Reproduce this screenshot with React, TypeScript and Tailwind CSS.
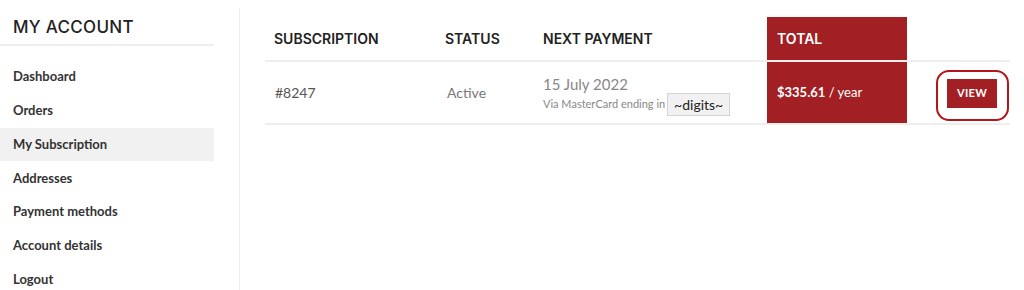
import React from 'react';

const MENU = [
  'Dashboard',
  'Orders',
  'My Subscription',
  'Addresses',
  'Payment methods',
  'Account details',
  'Logout',
];

const RED = 'bg-[#a21f23]';

export default function App() {
  return (
    <div className="flex h-[290px] w-[1024px] overflow-hidden bg-white font-['Lato','Noto_Sans',sans-serif]">
      {/* sidebar */}
      <aside className="w-[214px] shrink-0">
        <div className="h-[46px] border-b-2 border-[#eeeeee] pl-[13px] pt-[16px]">
          <h2 className="font-['Inter',sans-serif] text-[17px] font-medium leading-[22px] tracking-[0.3px] text-[#222]">
            MY ACCOUNT
          </h2>
        </div>
        <nav className="mt-[14px] flex flex-col">
          {MENU.map((item) => (
            <div
              key={item}
              className={`flex h-[33.8px] items-center pl-[13px] text-[13px] font-bold text-[#333] ${
                item === 'My Subscription' ? 'bg-[#f1f1f1]' : ''
              }`}
            >
              {item}
            </div>
          ))}
        </nav>
      </aside>

      {/* divider */}
      <div className="ml-[25px] mt-[8px] w-px bg-[#eeeeee]" />

      {/* content */}
      <main className="ml-[25px] pt-[17px]">
        <table className="w-[745px] table-fixed border-collapse">
          <colgroup>
            <col className="w-[170px]" />
            <col className="w-[98px]" />
            <col className="w-[234px]" />
            <col className="w-[140px]" />
            <col className="w-[103px]" />
          </colgroup>
          <thead>
            <tr className="h-[44px] border-b-2 border-[#eeeeee] text-left font-['Inter',sans-serif] text-[14px] font-semibold text-[#222]">
              <th className="pl-[9px] font-semibold">SUBSCRIPTION</th>
              <th className="pl-[10px] font-semibold">STATUS</th>
              <th className="pl-[10px] font-semibold">NEXT PAYMENT</th>
              <th className={`${RED} pl-[10px] font-semibold text-white`}>TOTAL</th>
              <th />
            </tr>
          </thead>
          <tbody>
            <tr className="h-[63px] border-b-2 border-[#eeeeee]">
              <td className="pl-[10px] text-[14px] text-[#555]">#8247</td>
              <td className="pl-[12px] text-[14px] text-[#777]">Active</td>
              <td className="pl-[10px] pt-[5px] align-middle">
                <div className="text-[15px] leading-[18px] text-[#888]">15 July 2022</div>
                <div className="flex items-center text-[11px] text-[#888]">
                  <span>Via MasterCard ending in</span>
                  <span className="ml-[2px] flex h-[23px] w-[63px] items-center justify-center border border-[#d4d4d4] bg-[#f1f1f1] text-[14px] text-[#222]">
                    ~digits~
                  </span>
                </div>
              </td>
              <td className={`${RED} pl-[10px] text-[13px] text-white`}>
                <span className="font-bold">$335.61</span> / year
              </td>
              <td className="relative">
                <div className="flex justify-end pr-[13px]">
                  <button className={`${RED} mt-[2px] h-[29px] w-[50px] text-[11px] font-bold tracking-[0.3px] text-white`}>
                    VIEW
                  </button>
                </div>
                <div className="pointer-events-none absolute left-[29px] top-[8px] h-[51px] w-[73px] rounded-[13px] border-2 border-[#b3151b]" />
              </td>
            </tr>
          </tbody>
        </table>
      </main>
    </div>
  );
}
